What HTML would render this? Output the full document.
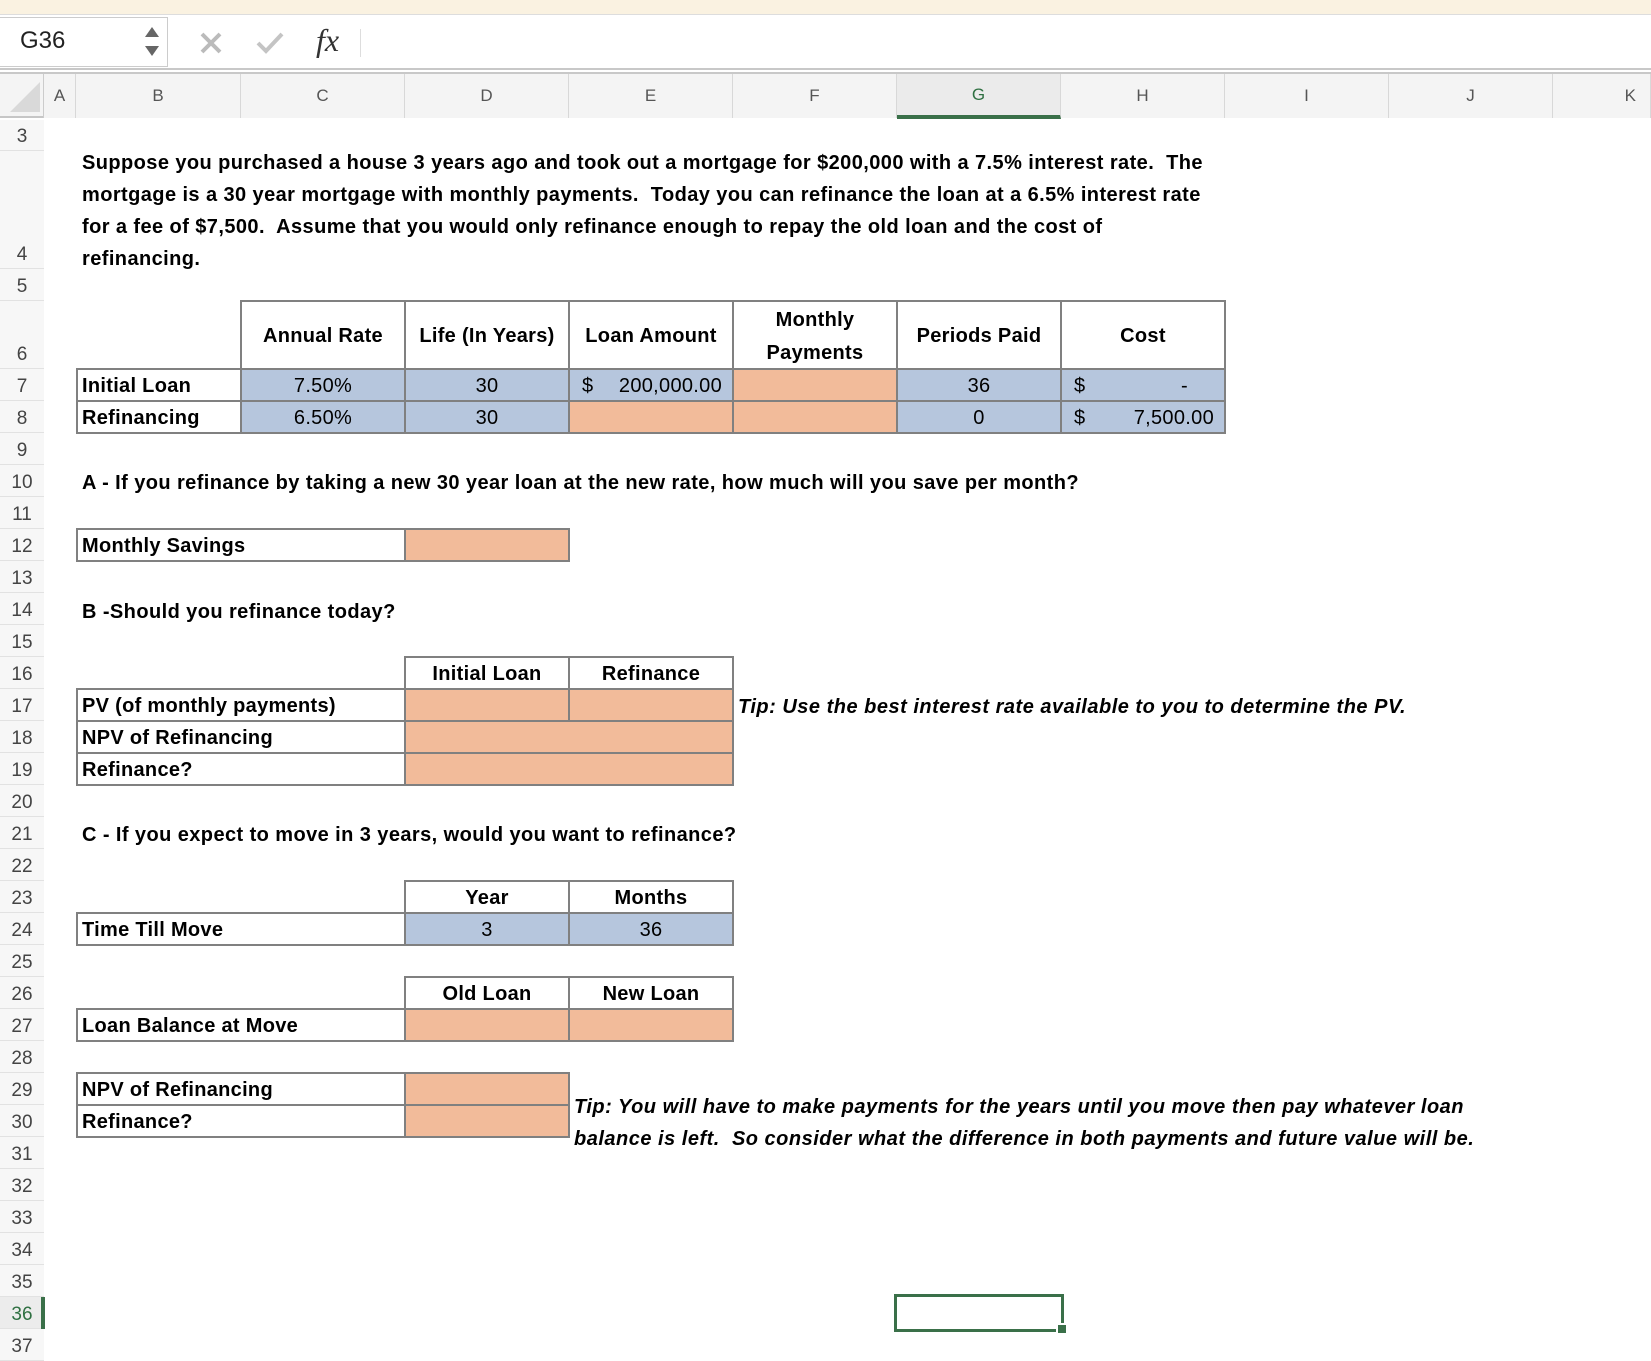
<!DOCTYPE html>
<html><head><meta charset="utf-8"><style>
*{margin:0;padding:0;box-sizing:border-box}
body{width:1651px;height:1357px;background:#fff;position:relative;overflow:hidden;font-family:"Liberation Sans",sans-serif}
.a{position:absolute}
.c{position:absolute;display:flex;align-items:center;font:bold 20px "Liberation Sans",sans-serif;color:#000;white-space:nowrap;padding-top:3px;letter-spacing:.3px}
.b{border:2px solid #808080}
.bl{background:#b6c6dd}
.or{background:#f2bb9a}
.n{font-weight:normal}
.ctr{justify-content:center}
.rh{position:absolute;left:0;width:44px;display:flex;align-items:flex-end;justify-content:center;font:19px "Liberation Sans",sans-serif;color:#444;padding-bottom:2px;border-bottom:1px solid #e2e2e2;background:#f7f7f7}
.ch{position:absolute;top:74px;height:44px;display:flex;align-items:center;justify-content:center;font:17px "Liberation Sans",sans-serif;color:#555;border-right:1px solid #d8d8d8;background:#f4f4f4}
.t{position:absolute;font:bold 20px "Liberation Sans",sans-serif;white-space:nowrap;color:#000;letter-spacing:.42px}
.it{font-style:italic;letter-spacing:.5px}
</style></head><body>
<div class="a" style="left:0;top:0;width:1651px;height:15px;background:#faf2e1;border-bottom:1px solid #ddd"></div>
<div class="a" style="left:0;top:16px;width:1651px;height:52px;background:#fff"></div>
<div class="a" style="left:0;top:17px;width:168px;height:50px;border:1px solid #ccc;border-left:none;background:#fff"></div>
<div class="a" style="left:20px;top:27px;font:24px 'Liberation Sans',sans-serif;color:#222">G36</div>
<svg class="a" style="left:143px;top:24px" width="18" height="36"><polygon points="2,13 16,13 9,3" fill="#666"/><polygon points="2,22 16,22 9,32" fill="#666"/></svg>
<svg class="a" style="left:198px;top:30px" width="26" height="26"><path d="M4 4L22 22M22 4L4 22" stroke="#bbb" stroke-width="4"/></svg>
<svg class="a" style="left:255px;top:30px" width="30" height="26"><path d="M3 13L11 21L27 4" stroke="#c4c4c4" stroke-width="4" fill="none"/></svg>
<div class="a" style="left:316px;top:22px;font:italic 32px 'Liberation Serif',serif;color:#333">fx</div>
<div class="a" style="left:360px;top:29px;width:1px;height:28px;background:#ddd"></div>
<div class="a" style="left:0;top:68px;width:1651px;height:2px;background:#c8c8c8"></div>
<div class="a" style="left:0;top:72px;width:1651px;height:2px;background:#c8c8c8"></div>
<div class="a" style="left:0;top:74px;width:1651px;height:44px;background:#f4f4f4;border-bottom:2px solid #c6c6c6"></div>
<svg class="a" style="left:8px;top:80px" width="34" height="34"><polygon points="32,2 32,32 2,32" fill="#d9d9d9"/></svg>
<div class="ch" style="left:0;width:44px;border-right:1px solid #ccc;background:transparent"></div>
<div class="ch" style="left:44px;width:32px">A</div>
<div class="ch" style="left:76px;width:165px">B</div>
<div class="ch" style="left:241px;width:164px">C</div>
<div class="ch" style="left:405px;width:164px">D</div>
<div class="ch" style="left:569px;width:164px">E</div>
<div class="ch" style="left:733px;width:164px">F</div>
<div class="ch" style="left:897px;width:164px;color:#2f7042;background:#ebebeb;border-bottom:4px solid #3a7049;height:45px">G</div>
<div class="ch" style="left:1061px;width:164px">H</div>
<div class="ch" style="left:1225px;width:164px">I</div>
<div class="ch" style="left:1389px;width:164px">J</div>
<div class="ch" style="left:1553px;width:98px;justify-content:flex-end;padding-right:14px">K</div>
<div class="a" style="left:0;top:120px;width:44px;height:1237px;background:#f7f7f7;border-right:2px solid #cfcfcf"></div>
<div class="rh" style="top:120px;height:31px">3</div>
<div class="rh" style="top:151px;height:118px">4</div>
<div class="rh" style="top:269px;height:32px">5</div>
<div class="rh" style="top:301px;height:68px">6</div>
<div class="rh" style="top:369px;height:32px">7</div>
<div class="rh" style="top:401px;height:32px">8</div>
<div class="rh" style="top:433px;height:32px">9</div>
<div class="rh" style="top:465px;height:32px">10</div>
<div class="rh" style="top:497px;height:32px">11</div>
<div class="rh" style="top:529px;height:32px">12</div>
<div class="rh" style="top:561px;height:32px">13</div>
<div class="rh" style="top:593px;height:32px">14</div>
<div class="rh" style="top:625px;height:32px">15</div>
<div class="rh" style="top:657px;height:32px">16</div>
<div class="rh" style="top:689px;height:32px">17</div>
<div class="rh" style="top:721px;height:32px">18</div>
<div class="rh" style="top:753px;height:32px">19</div>
<div class="rh" style="top:785px;height:32px">20</div>
<div class="rh" style="top:817px;height:32px">21</div>
<div class="rh" style="top:849px;height:32px">22</div>
<div class="rh" style="top:881px;height:32px">23</div>
<div class="rh" style="top:913px;height:32px">24</div>
<div class="rh" style="top:945px;height:32px">25</div>
<div class="rh" style="top:977px;height:32px">26</div>
<div class="rh" style="top:1009px;height:32px">27</div>
<div class="rh" style="top:1041px;height:32px">28</div>
<div class="rh" style="top:1073px;height:32px">29</div>
<div class="rh" style="top:1105px;height:32px">30</div>
<div class="rh" style="top:1137px;height:32px">31</div>
<div class="rh" style="top:1169px;height:32px">32</div>
<div class="rh" style="top:1201px;height:32px">33</div>
<div class="rh" style="top:1233px;height:32px">34</div>
<div class="rh" style="top:1265px;height:32px">35</div>
<div class="rh" style="top:1297px;height:32px;color:#2f7042;background:#ececec">36</div>
<div class="rh" style="top:1329px;height:32px">37</div>
<div class="a" style="left:41px;top:1297px;width:4px;height:32px;background:#3a7049"></div>

<div class="t" style="left:82px;top:147px;line-height:32px">Suppose you purchased a house 3 years ago and took out a mortgage for $200,000 with a 7.5% interest rate.&nbsp; The<br>mortgage is a 30 year mortgage with monthly payments.&nbsp; Today you can refinance the loan at a 6.5% interest rate<br>for a fee of $7,500.&nbsp; Assume that you would only refinance enough to repay the old loan and the cost of<br>refinancing.</div>

<div class="c b ctr" style="left:240px;top:300px;width:166px;height:70px">Annual Rate</div>
<div class="c b ctr" style="left:404px;top:300px;width:166px;height:70px">Life (In Years)</div>
<div class="c b ctr" style="left:568px;top:300px;width:166px;height:70px">Loan Amount</div>
<div class="c b ctr" style="left:732px;top:300px;width:166px;height:70px;text-align:center;line-height:33px;white-space:normal">Monthly<br>Payments</div>
<div class="c b ctr" style="left:896px;top:300px;width:166px;height:70px">Periods Paid</div>
<div class="c b ctr" style="left:1060px;top:300px;width:166px;height:70px">Cost</div>

<div class="c b" style="left:76px;top:368px;width:166px;height:34px;padding-left:4px">Initial Loan</div>
<div class="c b" style="left:76px;top:400px;width:166px;height:34px;padding-left:4px">Refinancing</div>
<div class="c b bl ctr n" style="left:240px;top:368px;width:166px;height:34px">7.50%</div>
<div class="c b bl ctr n" style="left:240px;top:400px;width:166px;height:34px">6.50%</div>
<div class="c b bl ctr n" style="left:404px;top:368px;width:166px;height:34px">30</div>
<div class="c b bl ctr n" style="left:404px;top:400px;width:166px;height:34px">30</div>
<div class="c b bl n" style="left:568px;top:368px;width:166px;height:34px;padding:3px 10px 0 12px;justify-content:space-between"><span>$</span><span>200,000.00</span></div>
<div class="c b or" style="left:568px;top:400px;width:166px;height:34px"></div>
<div class="c b or" style="left:732px;top:368px;width:166px;height:34px"></div>
<div class="c b or" style="left:732px;top:400px;width:166px;height:34px"></div>
<div class="c b bl ctr n" style="left:896px;top:368px;width:166px;height:34px">36</div>
<div class="c b bl ctr n" style="left:896px;top:400px;width:166px;height:34px">0</div>
<div class="c b bl n" style="left:1060px;top:368px;width:166px;height:34px;padding:3px 36px 0 12px;justify-content:space-between"><span>$</span><span>-</span></div>
<div class="c b bl n" style="left:1060px;top:400px;width:166px;height:34px;padding:3px 10px 0 12px;justify-content:space-between"><span>$</span><span>7,500.00</span></div>

<div class="t" style="left:82px;top:472px">A - If you refinance by taking a new 30 year loan at the new rate, how much will you save per month?</div>

<div class="c b" style="left:76px;top:528px;width:330px;height:34px;padding-left:4px">Monthly Savings</div>
<div class="c b or" style="left:404px;top:528px;width:166px;height:34px"></div>

<div class="t" style="left:82px;top:601px">B -Should you refinance today?</div>

<div class="c b ctr" style="left:404px;top:656px;width:166px;height:34px">Initial Loan</div>
<div class="c b ctr" style="left:568px;top:656px;width:166px;height:34px">Refinance</div>
<div class="c b" style="left:76px;top:688px;width:330px;height:34px;padding-left:4px">PV (of monthly payments)</div>
<div class="c b" style="left:76px;top:720px;width:330px;height:34px;padding-left:4px">NPV of Refinancing</div>
<div class="c b" style="left:76px;top:752px;width:330px;height:34px;padding-left:4px">Refinance?</div>
<div class="c b or" style="left:404px;top:688px;width:166px;height:34px"></div>
<div class="c b or" style="left:568px;top:688px;width:166px;height:34px"></div>
<div class="c b or" style="left:404px;top:720px;width:330px;height:34px"></div>
<div class="c b or" style="left:404px;top:752px;width:330px;height:34px"></div>
<div class="t it" style="left:738px;top:696px">Tip: Use the best interest rate available to you to determine the PV.</div>

<div class="t" style="left:82px;top:824px">C - If you expect to move in 3 years, would you want to refinance?</div>

<div class="c b ctr" style="left:404px;top:880px;width:166px;height:34px">Year</div>
<div class="c b ctr" style="left:568px;top:880px;width:166px;height:34px">Months</div>
<div class="c b" style="left:76px;top:912px;width:330px;height:34px;padding-left:4px">Time Till Move</div>
<div class="c b bl ctr n" style="left:404px;top:912px;width:166px;height:34px">3</div>
<div class="c b bl ctr n" style="left:568px;top:912px;width:166px;height:34px">36</div>

<div class="c b ctr" style="left:404px;top:976px;width:166px;height:34px">Old Loan</div>
<div class="c b ctr" style="left:568px;top:976px;width:166px;height:34px">New Loan</div>
<div class="c b" style="left:76px;top:1008px;width:330px;height:34px;padding-left:4px">Loan Balance at Move</div>
<div class="c b or" style="left:404px;top:1008px;width:166px;height:34px"></div>
<div class="c b or" style="left:568px;top:1008px;width:166px;height:34px"></div>

<div class="c b" style="left:76px;top:1072px;width:330px;height:34px;padding-left:4px">NPV of Refinancing</div>
<div class="c b" style="left:76px;top:1104px;width:330px;height:34px;padding-left:4px">Refinance?</div>
<div class="c b or" style="left:404px;top:1072px;width:166px;height:34px"></div>
<div class="c b or" style="left:404px;top:1104px;width:166px;height:34px"></div>
<div class="t it" style="left:574px;top:1091px;line-height:32px">Tip: You will have to make payments for the years until you move then pay whatever loan<br>balance is left.&nbsp; So consider what the difference in both payments and future value will be.</div>

<div class="a" style="left:894px;top:1294px;width:170px;height:38px;border:3px solid #3a7049"></div>
<div class="a" style="left:1056px;top:1323px;width:12px;height:12px;background:#3a7049;border:2px solid #fff"></div>
</body></html>
